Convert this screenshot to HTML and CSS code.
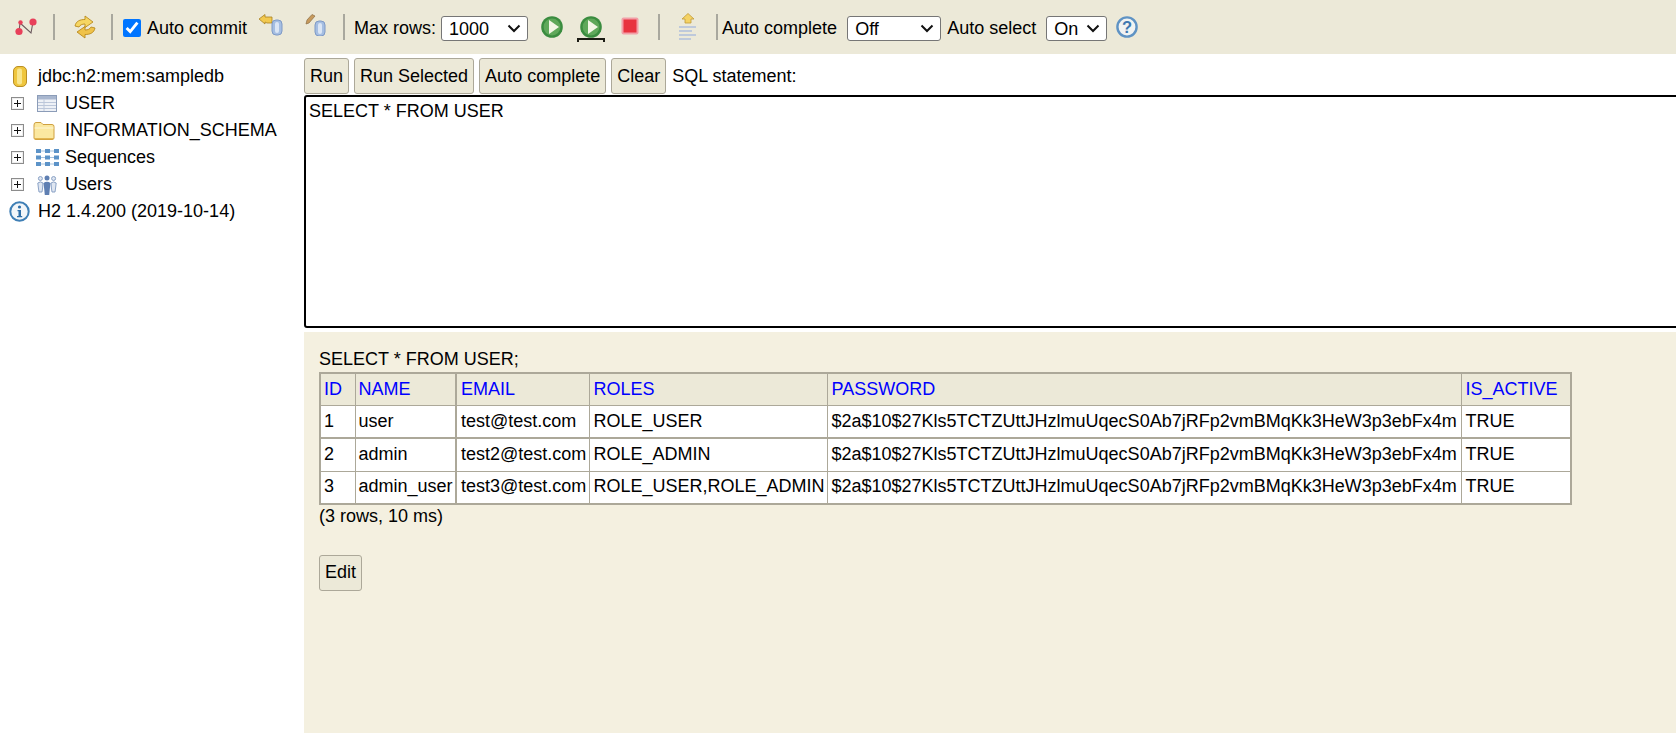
FILE: index.html
```html
<!DOCTYPE html>
<html lang="en">
<head>
<meta charset="utf-8">
<title>H2 Console</title>
<link rel="stylesheet" href="styles.css">
</head>
<body>
<header class="toolbar">
  <svg class="ic i-disc" viewBox="0 0 22 18"><path d="M4 14 L5 5 L16 15 L18 4" fill="none" stroke="#6b5a5e" stroke-width="1.1"/><circle cx="4" cy="13.5" r="3.6" fill="#e8405a"/><circle cx="18" cy="4" r="3.6" fill="#e8405a"/><circle cx="5.5" cy="4.5" r="2.2" fill="#e8405a"/></svg>
  <span class="sep s1"></span>
  <svg class="ic i-refresh" viewBox="0 0 22 24"><path d="M21 13 C20 18 16 19.5 11 19.5 L11 23 L3 17 L11 11.5 L11 15 C14 15 16 14 17 12 Z" fill="#efc24a" stroke="#b98a1e" stroke-width=".9"/><path d="M1 11 C2 6 6 4.5 11 4.5 L11 1 L19 7 L11 12.5 L11 9 C8 9 6 10 5 12 Z" fill="#f6d662" stroke="#b98a1e" stroke-width=".9"/></svg>
  <span class="sep s2"></span>
  <input class="check" type="checkbox" checked>
  <span class="label l-commit">Auto commit</span>
  <svg class="ic i-rollback" viewBox="0 0 25 22"><path d="M1 5 L7 0.5 L7 3 L14 3 L14 9 L9 9 L7 8 L7 10 Z" fill="#f2c94f" stroke="#a98222" stroke-width=".8"/><rect x="14" y="6" width="10" height="15" rx="4" fill="#a5bee2" stroke="#7f9ac6"/><rect x="17" y="8" width="4" height="11" rx="2" fill="#dbe6f5"/></svg>
  <svg class="ic i-commit" viewBox="0 0 21 22"><path d="M1 10 L2 6 L7 0.5 L10 2 L4 9 Z" fill="#c79a5c" stroke="#8d6f45" stroke-width=".7"/><rect x="10" y="7" width="10" height="15" rx="4" fill="#a5bee2" stroke="#7f9ac6"/><rect x="13" y="9" width="4" height="11" rx="2" fill="#dbe6f5"/></svg>
  <span class="sep s3"></span>
  <span class="label l-max">Max rows:</span>
  <select class="sel sel-rows"><option>1000</option></select>
  <svg class="ic i-play" viewBox="0 0 22 22"><circle cx="11" cy="11" r="10.8" fill="#3a8c3f"/><circle cx="11" cy="11" r="8.4" fill="#5fa85a"/><path d="M8 4 L18 11 L8 18 Z" fill="#f3f6e6"/></svg>
  <svg class="ic i-play2" viewBox="0 0 28 26"><circle cx="14" cy="11" r="10.8" fill="#3a8c3f"/><circle cx="14" cy="11" r="8.4" fill="#5fa85a"/><path d="M11 4 L21 11 L11 18 Z" fill="#f3f6e6"/><path d="M1 26 V23 H27 V26" fill="none" stroke="#1c1c14" stroke-width="2"/></svg>
  <svg class="ic i-stop" viewBox="0 0 18 18"><rect x=".5" y=".5" width="17" height="17" rx="2" fill="#f2a0a8"/><rect x="2.5" y="2.5" width="13" height="13" fill="#e8333f"/></svg>
  <span class="sep s4"></span>
  <svg class="ic i-history" viewBox="0 0 20 28"><path d="M10 0.5 L16 6 L13 6 L13 10 L7 10 L7 6 L4 6 Z" fill="#f4d264" stroke="#c09a38" stroke-width=".8"/><path d="M1 14 H18 M1 18 H14 M1 22 H18 M1 26 H13" stroke="#aebfdc" stroke-width="1.4"/></svg>
  <span class="sep s5"></span>
  <span class="label l-ac">Auto complete</span>
  <select class="sel sel-ac"><option>Off</option></select>
  <span class="label l-as">Auto select</span>
  <select class="sel sel-as"><option>On</option></select>
  <svg class="ic i-help" viewBox="0 0 22 22"><circle cx="11" cy="11" r="9.6" fill="#f1f3f2" stroke="#5f93c4" stroke-width="2.4"/><text x="11" y="17" class="help-q">?</text></svg>
</header>

<div class="main">
  <aside class="tree">
    <div class="row root">
      <svg class="ic i-db" viewBox="0 0 14 21"><rect x=".5" y=".5" width="13" height="20" rx="4.5" fill="#efc63e" stroke="#b98e24"/><rect x="4" y="2.5" width="5" height="16" rx="2" fill="#f8e58c"/></svg>
      <span>jdbc:h2:mem:sampledb</span>
    </div>
    <div class="row">
      <span class="plus"></span>
      <span class="slot"><svg class="ic i-table" viewBox="0 0 20 17"><rect x=".5" y=".5" width="19" height="16" fill="#eef1f6" stroke="#8b9cb8"/><rect x="1" y="1" width="18" height="3.5" fill="#a9b7cf"/><path d="M1 7.5 H19 M1 10.5 H19 M1 13.5 H19 M7 4.5 V16" stroke="#bcc7da"/></svg></span>
      <span>USER</span>
    </div>
    <div class="row">
      <span class="plus"></span>
      <span class="slot"><svg class="ic i-folder" viewBox="0 0 22 19"><path d="M1 4 Q1 1.5 3 1.5 H8 L10 3.5 H19 Q21 3.5 21 5.5 V17 Q21 18.5 19 18.5 H3 Q1 18.5 1 17 Z" fill="#fbe8a0" stroke="#cfa040"/><path d="M1.5 7 H20.5" stroke="#fdf6d6"/><path d="M2 17.8 H20" stroke="#dca93e" stroke-width="1.2"/></svg></span>
      <span>INFORMATION_SCHEMA</span>
    </div>
    <div class="row">
      <span class="plus"></span>
      <span class="slot"><svg class="ic i-seq" viewBox="0 0 23 17"><g fill="#5c93c8"><rect x="0" y="0" width="5" height="4"/><rect x="9" y="0" width="5" height="4"/><rect x="18" y="0" width="5" height="4"/><rect x="0" y="6.5" width="5" height="4"/><rect x="9" y="6.5" width="5" height="4"/><rect x="18" y="6.5" width="5" height="4"/><rect x="0" y="13" width="5" height="4"/><rect x="9" y="13" width="5" height="4"/><rect x="18" y="13" width="5" height="4"/></g><path d="M5 2 H9 M14 2 H18 M5 8.5 H9 M14 8.5 H18 M5 15 H9 M14 15 H18" stroke="#a6c3de"/></svg></span>
      <span>Sequences</span>
    </div>
    <div class="row">
      <span class="plus"></span>
      <span class="slot"><svg class="ic i-users" viewBox="0 0 20 21"><circle cx="3.4" cy="4.5" r="2" fill="#dfe6f1" stroke="#7f98c0" stroke-width=".9"/><circle cx="16.6" cy="4.5" r="2" fill="#dfe6f1" stroke="#7f98c0" stroke-width=".9"/><path d="M.8 9 Q3.4 6.8 6 9 L5.6 14 L5 18 H2 L1.4 14 Z M19.2 9 Q16.6 6.8 14 9 L14.4 14 L15 18 H18 L18.6 14 Z" fill="#dfe6f1" stroke="#7f98c0" stroke-width=".9"/><circle cx="10" cy="4" r="2.5" fill="#5f7fb2"/><path d="M6.5 9 Q10 6.5 13.5 9 L12.8 15 L12.2 21 H7.8 L7.2 15 Z" fill="#5f7fb2"/></svg></span>
      <span>Users</span>
    </div>
    <div class="row version">
      <svg class="ic i-info" viewBox="0 0 21 21"><circle cx="10.5" cy="10.5" r="9.2" fill="#f2f6f9" stroke="#3f7fb5" stroke-width="2"/><circle cx="10.5" cy="6" r="1.6" fill="#2f6fa8"/><path d="M8.5 9 H12 V15 H13.2 V16.3 H8 V15 H9.5 V10.3 H8.5 Z" fill="#2f6fa8"/></svg>
      <span>H2 1.4.200 (2019-10-14)</span>
    </div>
  </aside>

  <main class="content">
    <div class="actions">
      <button class="btn">Run</button>
      <button class="btn">Run Selected</button>
      <button class="btn">Auto complete</button>
      <button class="btn">Clear</button>
      <span class="stmt">SQL statement:</span>
    </div>
    <textarea class="sql" spellcheck="false">SELECT * FROM USER</textarea>
    <section class="result">
      <div class="query">SELECT * FROM USER;</div>
      <table class="grid">
        <colgroup>
          <col class="c-id"><col class="c-name"><col class="c-email"><col class="c-roles"><col class="c-pass"><col class="c-active">
        </colgroup>
        <thead>
          <tr><th><a href="#">ID</a></th><th><a href="#">NAME</a></th><th><a href="#">EMAIL</a></th><th><a href="#">ROLES</a></th><th><a href="#">PASSWORD</a></th><th><a href="#">IS_ACTIVE</a></th></tr>
        </thead>
        <tbody>
          <tr class="thick"><td>1</td><td>user</td><td>test@test.com</td><td>ROLE_USER</td><td>$2a$10$27Kls5TCTZUttJHzlmuUqecS0Ab7jRFp2vmBMqKk3HeW3p3ebFx4m</td><td>TRUE</td></tr>
          <tr><td>2</td><td>admin</td><td>test2@test.com</td><td>ROLE_ADMIN</td><td>$2a$10$27Kls5TCTZUttJHzlmuUqecS0Ab7jRFp2vmBMqKk3HeW3p3ebFx4m</td><td>TRUE</td></tr>
          <tr><td>3</td><td>admin_user</td><td>test3@test.com</td><td>ROLE_USER,ROLE_ADMIN</td><td>$2a$10$27Kls5TCTZUttJHzlmuUqecS0Ab7jRFp2vmBMqKk3HeW3p3ebFx4m</td><td>TRUE</td></tr>
        </tbody>
      </table>
      <div class="stats">(3 rows, 10 ms)</div>
      <button class="btn edit">Edit</button>
    </section>
  </main>
</div>
</body>
</html>
```

FILE: styles.css
```css
* { box-sizing: border-box; }
html, body { height: 100%; }
body {
  margin: 0;
  overflow: hidden;
  display: flex;
  flex-direction: column;
  background: #fff;
  color: #000;
  font: 18px/1.2 "Liberation Sans", Arial, sans-serif;
}
.ic { display: block; flex: none; }

/* toolbar */
.toolbar {
  flex: none;
  height: 54px;
  display: flex;
  align-items: center;
  padding-left: 15px;
  background: #ece9d8;
}
.sep { flex: none; width: 2px; height: 26px; background: #a9a89e; }
.label { flex: none; white-space: nowrap; padding-top: 3px; }
.sel {
  flex: none;
  height: 25px;
  margin-top: 2px;
  padding: 2px 0 0 7px;
  font: inherit;
  color: #000;
  appearance: none;
  background: #fff url("data:image/svg+xml,%3Csvg xmlns='http://www.w3.org/2000/svg' width='14' height='9'%3E%3Cpath d='M1.5 1.5 L7 7 L12.5 1.5' fill='none' stroke='%23111' stroke-width='2'/%3E%3C/svg%3E") no-repeat right 6px center;
  border: 1px solid #767676;
  border-radius: 3px;
}
.i-disc { width: 22px; height: 18px; }
.s1 { margin-left: 16px; }
.i-refresh { width: 22px; height: 24px; margin-left: 19px; }
.s2 { margin-left: 15px; }
.check { flex: none; width: 18px; height: 18px; margin: 2px 6px 0 10px; }
.i-rollback { width: 25px; height: 22px; margin: -4px 0 0 11px; }
.i-commit { width: 21px; height: 22px; margin: -4px 0 0 22px; }
.s3 { margin-left: 17px; }
.l-max { margin-left: 9px; }
.sel-rows { width: 87px; margin-left: 5px; }
.i-play { width: 22px; height: 22px; margin-left: 13px; }
.i-play2 { width: 28px; height: 26px; margin: 4px 0 0 14px; }
.i-stop { width: 18px; height: 18px; margin: -2px 0 0 16px; }
.s4 { margin-left: 19px; }
.i-history { width: 20px; height: 28px; margin-left: 18px; }
.s5 { margin-left: 18px; }
.l-ac { margin-left: 4px; }
.sel-ac { width: 94px; margin-left: 10px; }
.l-as { margin-left: 6px; }
.sel-as { width: 61px; margin-left: 10px; }
.i-help { width: 22px; height: 22px; margin-left: 9px; }
.help-q { font: bold 16.5px "Liberation Sans", Arial, sans-serif; fill: #3f78b0; text-anchor: middle; }

/* layout */
.main { flex: 1; min-height: 0; display: flex; }
.tree { flex: none; width: 304px; padding-top: 9px; }
.content { flex: 1; min-width: 0; display: flex; flex-direction: column; overflow: hidden; }

/* tree */
.row { height: 27px; display: flex; align-items: center; padding-left: 11px; white-space: nowrap; }
.plus {
  flex: none;
  position: relative;
  width: 13px;
  height: 13px;
  background: #fff;
  border: 1px solid #8c8c8c;
  box-shadow: inset 0 0 0 1px #eee;
}
.plus::before, .plus::after { content: ""; position: absolute; background: #111; }
.plus::before { left: 2px; top: 5px; width: 7px; height: 1px; }
.plus::after { left: 5px; top: 2px; width: 1px; height: 7px; }
.slot { flex: none; width: 41px; display: flex; }
.root { padding-left: 13px; gap: 11px; }
.version { padding-left: 9px; gap: 8px; }
.i-db { width: 14px; height: 21px; }
.i-table { width: 20px; height: 17px; margin-left: 13px; }
.i-folder { width: 22px; height: 19px; margin-left: 9px; }
.i-seq { width: 23px; height: 17px; margin-left: 12px; }
.i-users { width: 20px; height: 21px; margin-left: 13px; }
.i-info { width: 21px; height: 21px; }

/* sql editor */
.actions { flex: none; height: 41px; display: flex; align-items: flex-end; gap: 5px; padding-bottom: 1px; }
.btn {
  height: 36px;
  padding: 1px 5px 0;
  font: inherit;
  color: #000;
  background: #ece9d8;
  border: 1px solid #aca899;
  border-radius: 3px;
}
.stmt { align-self: center; margin: 5px 0 0 1px; }
.sql {
  flex: none;
  display: block;
  width: calc(100% + 12px);
  height: 233px;
  padding: 4px 3px;
  font: inherit;
  color: #000;
  background: #fff;
  border: 2px solid #000;
  border-radius: 3px;
  outline: 0;
  resize: none;
}

/* results */
.result { flex: 1; margin-top: 4px; padding: 15px 15px 0; background: #f4f0e0; }
.query { height: 25px; display: flex; align-items: center; }
.grid { border-collapse: collapse; table-layout: fixed; width: 1251px; border: 2px solid #aca899; }
.c-id { width: 35px; }
.c-name { width: 101px; }
.c-email { width: 133px; }
.c-roles { width: 238px; }
.c-pass { width: 634px; }
.c-active { width: 110px; }
.grid th, .grid td {
  height: 32.7px;
  padding: 0 3px;
  font-weight: 400;
  text-align: left;
  white-space: nowrap;
  overflow: hidden;
  border: 1px solid #aca899;
}
.grid th:nth-child(n+3), .grid td:nth-child(n+3) { padding-left: 4px; }
.grid th:nth-child(2), .grid td:nth-child(2) { border-right-width: 2px; }
.grid th { background: #ece9d8; border-top-width: 2px; }
.grid td { background: #fff; }
.grid .thick td { border-bottom-width: 2px; }
.grid a { color: #00f; text-decoration: none; }
.stats { height: 24px; display: flex; align-items: center; }
.edit { display: block; width: 43px; margin-top: 26px; padding: 0; }
```
